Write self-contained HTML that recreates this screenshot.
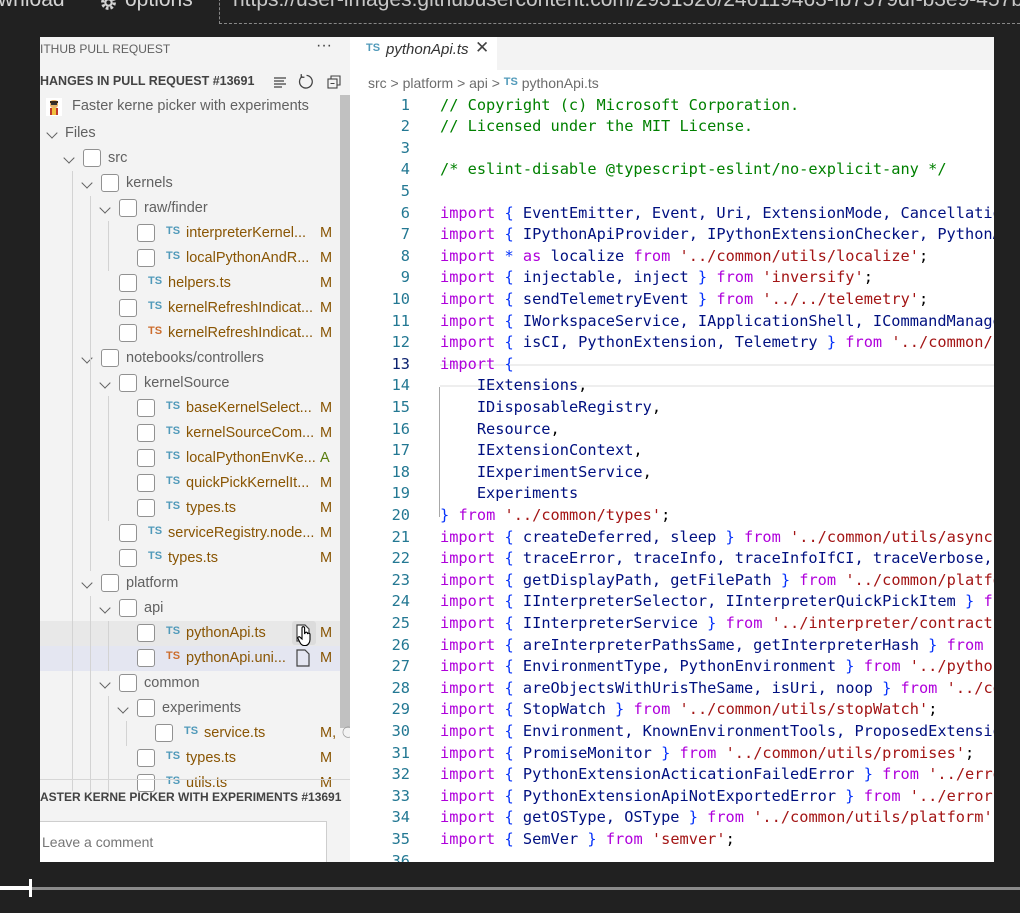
<!DOCTYPE html>
<html><head><meta charset="utf-8"><style>
*{margin:0;padding:0;box-sizing:border-box}
body{width:1020px;height:913px;background:#212121;position:relative;overflow:hidden;font-family:"Liberation Sans",sans-serif}
.abs{position:absolute}
.top{color:#d4d4d4;font-size:21px;white-space:nowrap}
#app{left:40px;top:37px;width:954px;height:825px;background:#fff;overflow:hidden}
#side{left:0;top:0;width:310px;height:825px;background:#f3f3f3;overflow:hidden;font-size:14px;color:#616161}
.row{position:absolute;left:0;width:300px;height:25px;line-height:25px;white-space:nowrap}
.chev{position:absolute;top:8px;width:8px;height:8px;border-right:1.3px solid #616161;border-bottom:1.3px solid #616161;transform:rotate(45deg)}
.cb{position:absolute;top:3px;width:18px;height:18px;border:1px solid #919191;border-radius:3px;background:#fff}
.ts{position:absolute;font-size:11px;font-weight:bold;color:#519aba;top:-2px}
.ts.o{color:#cc6d2e}
.fn{position:absolute;color:#895503}
.st{position:absolute;left:280px;color:#895503}
.guide{position:absolute;width:1px;background:#d3d3d3}
#code{left:310px;top:0;width:644px;height:825px;overflow:hidden}
.ln{position:absolute;left:0;width:60px;text-align:right;color:#237893;font-family:"DejaVu Sans Mono",monospace;font-size:15.3px}
.cl{position:absolute;left:90px;white-space:pre;font-family:"DejaVu Sans Mono",monospace;font-size:15.3px;color:#000}
.k{color:#af00db}.b{color:#0431fa}.v{color:#001080}.s{color:#a31515}.c{color:#008000}
</style></head><body>
<div class="abs top" style="left:-2px;top:-12px">wnload</div>
<svg class="abs" style="left:100px;top:-6px" width="17" height="17" viewBox="0 0 16 16"><circle cx="8" cy="8" r="5.5" fill="none" stroke="#d4d4d4" stroke-width="3" stroke-dasharray="2.5 1.8"/><circle cx="8" cy="8" r="3" fill="none" stroke="#d4d4d4" stroke-width="2"/></svg>
<div class="abs top" style="left:125px;top:-12px">options</div>
<div class="abs" style="left:219px;top:-2px;width:801px;height:26px;border-left:1px dashed #888;border-bottom:1px dashed #888"></div>
<div class="abs" style="left:233px;top:-12px;width:787px;overflow:hidden"><div class="top" style="color:#c8c8c8">https://user-images.githubusercontent.com/2931520/246119463-fb7579df-b3e9-457b-8c0c-f0e0fc</div></div>

<div id="app" class="abs">
 <div id="side" class="abs">
  <div class="abs" style="left:0;top:5px;font-size:12px;color:#616161">ITHUB PULL REQUEST</div>
  <div class="abs" style="left:276px;top:0px;font-size:16px;color:#424242">···</div>
  <div class="abs" style="left:0;top:37px;font-size:12.5px;font-weight:bold;color:#424242;white-space:nowrap">HANGES IN PULL REQUEST #13691</div>
  <svg class="abs" style="left:232px;top:37px" width="16" height="16" viewBox="0 0 16 16" stroke="#424242" stroke-width="1.2"><path d="M2 4h12M2 7h10M2 10h12M2 13h8"/></svg>
  <svg class="abs" style="left:257px;top:36px" width="17" height="17" viewBox="0 0 16 16" fill="none" stroke="#424242" stroke-width="1.2"><path d="M5 3.2A6 6 0 1 0 9 2.2"/><path d="M4 1v3h3"/></svg>
  <svg class="abs" style="left:286px;top:37px" width="16" height="16" viewBox="0 0 16 16" fill="none" stroke="#424242" stroke-width="1.1"><rect x="2" y="5" width="9" height="9"/><path d="M5 5V2h9v9h-3M4.5 9.5h4"/></svg>
  <div class="abs" style="left:300px;top:58px;width:10px;height:633px;background:#c1c1c1"></div>
  <div class="abs" style="left:6px;top:61px;width:16px;height:18px;background:#fff"><svg width="16" height="18" viewBox="0 0 16 18"><rect x="4" y="2" width="8" height="8" rx="3" fill="#e8b56a"/><path d="M4 3h8v2H4z" fill="#3a2a1a"/><rect x="5" y="5" width="6" height="2" fill="#333"/><rect x="4" y="10" width="8" height="7" fill="#c0392b"/><rect x="6" y="10" width="4" height="7" fill="#f0c040"/></svg></div>
  <div class="abs" style="left:32px;top:61px;font-size:14.5px;color:#616161;white-space:nowrap">Faster kerne picker with experiments</div>
  <div id="tree"></div>
  <div class="abs" style="left:0;top:742px;width:310px;height:1px;background:#d6d6d6"></div>
  <div class="abs" style="left:0;top:753px;font-size:12px;font-weight:bold;color:#424242;white-space:nowrap">ASTER KERNE PICKER WITH EXPERIMENTS #13691</div>
  <div class="abs" style="left:0;top:784px;width:287px;height:50px;background:#fff;border:1px solid #cecece;border-left:none"></div>
  <div class="abs" style="left:2px;top:797px;font-size:14px;color:#767676">Leave a comment</div>
 </div>
 <div id="code" class="abs">
  <div class="abs" style="left:0;top:0;width:147px;height:33px;background:#fff"></div>
  <div class="abs" style="left:147px;top:0;width:497px;height:33px;background:#f3f3f3"></div>
  <div class="abs" style="left:16px;top:5px;font-size:11px;font-weight:bold;color:#519aba">TS</div>
  <div class="abs" style="left:36px;top:4px;font-size:15px;font-style:italic;color:#333">pythonApi.ts</div>
  <div class="abs" style="left:125px;top:1px;font-size:17px;color:#424242">✕</div>
  <div class="abs" style="left:18px;top:38px;font-size:14px;color:#6c6c6c;white-space:nowrap">src &gt; platform &gt; api &gt; <span style="font-size:11px;font-weight:bold;color:#519aba;position:relative;top:-3px">TS</span> pythonApi.ts</div>
  <div class="abs" style="left:90px;top:327px;width:560px;height:23px;border-top:2px solid #eeeeee;border-bottom:2px solid #eeeeee"></div>
  <div class="abs" style="left:89px;top:350px;width:1px;height:130px;background:#a8a8a8"></div>
  <div id="lines"></div>
 </div>
</div>
<div class="abs" style="left:0;top:887px;width:1020px;height:3px;background:#8a8a8a"></div>
<div class="abs" style="left:0;top:886px;width:31px;height:4px;background:#fff"></div>
<div class="abs" style="left:29px;top:879px;width:3px;height:18px;background:#fff"></div>
<script>
var rows=[["Files",0,0],["src",1,0],["kernels",2,0],["raw/finder",3,0],["interpreterKernel...",4,1,"M"],["localPythonAndR...",4,1,"M"],["helpers.ts",3,1,"M"],["kernelRefreshIndicat...",3,1,"M"],["kernelRefreshIndicat...",3,2,"M"],["notebooks/controllers",2,0],["kernelSource",3,0],["baseKernelSelect...",4,1,"M"],["kernelSourceCom...",4,1,"M"],["localPythonEnvKe...",4,1,"A"],["quickPickKernelIt...",4,1,"M"],["types.ts",4,1,"M"],["serviceRegistry.node...",3,1,"M"],["types.ts",3,1,"M"],["platform",2,0],["api",3,0],["pythonApi.ts",4,1,"M"],["pythonApi.uni...",4,2,"M"],["common",3,0],["experiments",4,0],["service.ts",5,1,"M,"],["types.ts",4,1,"M"],["utils.ts",4,1,"M"]];
var h="";
rows.forEach(function(r,i){
 var y=84+i*25,L=r[1];
 var bg=i==20?"background:#e8e8e8;":i==21?"background:#e4e6f1;":"";
 h+='<div class="row" style="top:'+y+'px;'+bg+'font-size:14.5px">';
 if(L==0){h+='<div class="chev" style="left:8px"></div><span style="position:absolute;left:25px">Files</span>';}
 else{
  var cb=43+18*(L-1);
  if(r[2]==0){h+='<div class="chev" style="left:'+(cb-18)+'px"></div><div class="cb" style="left:'+cb+'px"></div><span style="position:absolute;left:'+(cb+25)+'px">'+r[0]+'</span>';}
  else{h+='<div class="cb" style="left:'+cb+'px"></div><span class="ts'+(r[2]==2?' o':'')+'" style="left:'+(cb+29)+'px">TS</span><span class="fn" style="left:'+(cb+49)+'px">'+r[0]+'</span><span class="st"'+(r[3]=="A"?' style="color:#587c0c"':'')+'>'+r[3]+'</span>';}
 }
 if(i==24)h+='<span style="position:absolute;left:302px;top:-1px;font-size:11px;color:#999">◯</span>';
 h+='</div>';
});
h+='<div class="guide" style="left:32px;top:134px;height:620px"></div><div class="guide" style="left:50px;top:159px;height:175px"></div><div class="guide" style="left:68px;top:184px;height:50px"></div><div class="guide" style="left:50px;top:334px;height:200px"></div><div class="guide" style="left:68px;top:359px;height:125px"></div><div class="guide" style="left:50px;top:559px;height:200px"></div><div class="guide" style="left:68px;top:584px;height:50px"></div><div class="guide" style="left:68px;top:659px;height:100px"></div><div class="guide" style="left:86px;top:684px;height:25px"></div>';
h+='<svg style="position:absolute;left:252px;top:584px" width="28" height="48" viewBox="0 0 28 48"><rect x="0" y="0" width="24" height="24" rx="3" fill="#dcdcdc"/><path d="M5 4h8l4 4v12H5z" fill="#fff" stroke="#424242" stroke-width="1.2"/><path d="M5 29h8l4 4v12H5z" fill="none" stroke="#424242" stroke-width="1.2"/><path d="M10 12v-5a1.3 1.3 0 0 1 2.6 0v6l.4-1a1.3 1.3 0 0 1 2.5.5v.5a1.3 1.3 0 0 1 2.5.5v5c0 3-2 6-4.5 6h-1.5c-2 0-3-1-4-3l-2-4a1.2 1.2 0 0 1 2-1.3L10 18z" fill="#fff" stroke="#000" stroke-width="1.1"/></svg>';
document.getElementById("tree").innerHTML=h;
var I='<span class="k">import</span> <span class="b">{</span> ',C=' <span class="b">}</span> <span class="k">from</span> ';
function imp(names,src){return I+'<span class="v">'+names+'</span>'+C+'<span class="s">\''+src+'\'</span>;'}
var L=[
'<span class="c">// Copyright (c) Microsoft Corporation.</span>',
'<span class="c">// Licensed under the MIT License.</span>','',
'<span class="c">/* eslint-disable @typescript-eslint/no-explicit-any */</span>','',
imp('EventEmitter, Event, Uri, ExtensionMode, CancellationToken','vscode'),
imp('IPythonApiProvider, IPythonExtensionChecker, PythonApi','./types'),
'<span class="k">import</span> <span class="b">*</span> <span class="k">as</span> <span class="v">localize</span> <span class="k">from</span> <span class="s">\'../common/utils/localize\'</span>;',
imp('injectable, inject','inversify'),
imp('sendTelemetryEvent','../../telemetry'),
imp('IWorkspaceService, IApplicationShell, ICommandManager','../common/application/types'),
imp('isCI, PythonExtension, Telemetry','../common/constants'),
'<span class="k">import</span> <span class="b">{</span>',
'    <span class="v">IExtensions</span>,','    <span class="v">IDisposableRegistry</span>,','    <span class="v">Resource</span>,','    <span class="v">IExtensionContext</span>,','    <span class="v">IExperimentService</span>,','    <span class="v">Experiments</span>',
'<span class="b">}</span> <span class="k">from</span> <span class="s">\'../common/types\'</span>;',
imp('createDeferred, sleep','../common/utils/async'),
imp('traceError, traceInfo, traceInfoIfCI, traceVerbose, traceWarning','../logging'),
imp('getDisplayPath, getFilePath','../common/platform/fs-paths'),
imp('IInterpreterSelector, IInterpreterQuickPickItem','../interpreter/configuration/types'),
imp('IInterpreterService','../interpreter/contracts'),
imp('areInterpreterPathsSame, getInterpreterHash','../pythonEnvironments/info/interpreter'),
imp('EnvironmentType, PythonEnvironment','../pythonEnvironments/info'),
imp('areObjectsWithUrisTheSame, isUri, noop','../common/utils/misc'),
imp('StopWatch','../common/utils/stopWatch'),
imp('Environment, KnownEnvironmentTools, ProposedExtensionAPI','./pythonApiTypes'),
imp('PromiseMonitor','../common/utils/promises'),
imp('PythonExtensionActicationFailedError','../errors/pythonExtActivationFailed'),
imp('PythonExtensionApiNotExportedError','../errors/pythonExtApiNotExported'),
imp('getOSType, OSType','../common/utils/platform'),
imp('SemVer','semver'),''];
var o="";
L.forEach(function(t,i){var y=58.5+i*21.6;o+='<div class="ln" style="top:'+y+'px'+(i==12?';color:#0b216f':'')+'">'+(i+1)+'</div><div class="cl" style="top:'+y+'px">'+t+'</div>';});
document.getElementById("lines").innerHTML=o;
</script>
</body></html>
